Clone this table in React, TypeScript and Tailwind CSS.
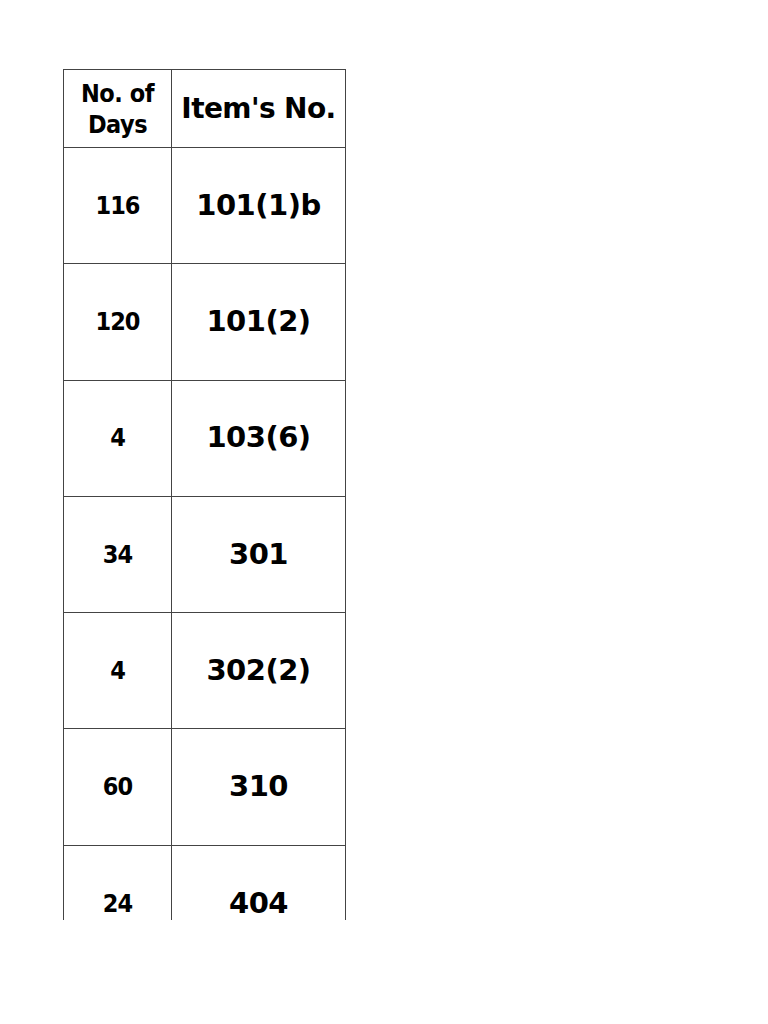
const rows = [
  { days: '116', item: '101(1)b' },
  { days: '120', item: '101(2)' },
  { days: '4', item: '103(6)' },
  { days: '34', item: '301' },
  { days: '4', item: '302(2)' },
  { days: '60', item: '310' },
  { days: '24', item: '404' },
];

const condensed = { fontFamily: '"DejaVu Sans Condensed", "DejaVu Sans", sans-serif' };

export default function App() {
  return (
    <div className="w-[768px] h-[1024px] bg-white pt-[69px] pl-[63px]">
      <div className="w-[283px] h-[851px] overflow-hidden">
        <table
          className="border-collapse text-black"
          style={{ fontFamily: 'Tahoma, "DejaVu Sans", sans-serif' }}
        >
          <thead>
            <tr className="h-[78px]">
              <th
                className="w-[108px] border border-[#444] p-0 text-center align-middle text-[25px] leading-[31px] font-bold tracking-[-0.5px]"
                style={condensed}
              >
                No. of
                <br />
                Days
              </th>
              <th className="w-[174px] border border-[#444] p-0 text-center align-middle text-[28px] font-bold tracking-[-0.6px]">
                Item's No.
              </th>
            </tr>
          </thead>
          <tbody>
            {rows.map((r, i) => (
              <tr key={i} className="h-[116.3px]">
                <td
                  className="border border-[#444] p-0 text-center align-middle text-[25px] font-bold tracking-[-1px]"
                  style={condensed}
                >
                  {r.days}
                </td>
                <td className="border border-[#444] p-0 text-center align-middle text-[29px] font-bold tracking-[-0.5px]">
                  {r.item}
                </td>
              </tr>
            ))}
          </tbody>
        </table>
      </div>
    </div>
  );
}
